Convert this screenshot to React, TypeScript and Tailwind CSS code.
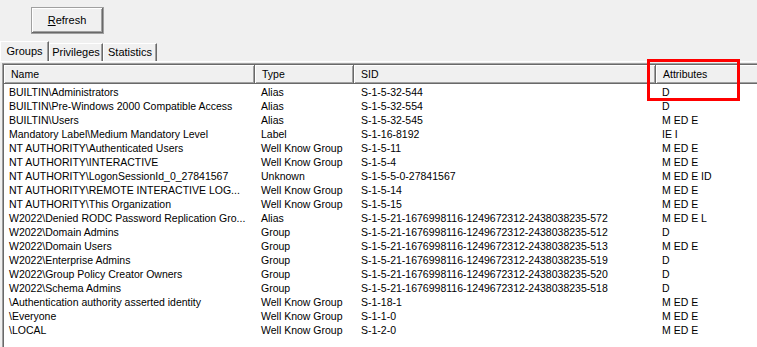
const rows: [string, string, string, string][] = [
  ['BUILTIN\\Administrators', 'Alias', 'S-1-5-32-544', 'D'],
  ['BUILTIN\\Pre-Windows 2000 Compatible Access', 'Alias', 'S-1-5-32-554', 'D'],
  ['BUILTIN\\Users', 'Alias', 'S-1-5-32-545', 'M ED E'],
  ['Mandatory Label\\Medium Mandatory Level', 'Label', 'S-1-16-8192', 'IE I'],
  ['NT AUTHORITY\\Authenticated Users', 'Well Know Group', 'S-1-5-11', 'M ED E'],
  ['NT AUTHORITY\\INTERACTIVE', 'Well Know Group', 'S-1-5-4', 'M ED E'],
  ['NT AUTHORITY\\LogonSessionId_0_27841567', 'Unknown', 'S-1-5-5-0-27841567', 'M ED E ID'],
  ['NT AUTHORITY\\REMOTE INTERACTIVE LOG...', 'Well Know Group', 'S-1-5-14', 'M ED E'],
  ['NT AUTHORITY\\This Organization', 'Well Know Group', 'S-1-5-15', 'M ED E'],
  ['W2022\\Denied RODC Password Replication Gro...', 'Alias', 'S-1-5-21-1676998116-1249672312-2438038235-572', 'M ED E L'],
  ['W2022\\Domain Admins', 'Group', 'S-1-5-21-1676998116-1249672312-2438038235-512', 'D'],
  ['W2022\\Domain Users', 'Group', 'S-1-5-21-1676998116-1249672312-2438038235-513', 'M ED E'],
  ['W2022\\Enterprise Admins', 'Group', 'S-1-5-21-1676998116-1249672312-2438038235-519', 'D'],
  ['W2022\\Group Policy Creator Owners', 'Group', 'S-1-5-21-1676998116-1249672312-2438038235-520', 'D'],
  ['W2022\\Schema Admins', 'Group', 'S-1-5-21-1676998116-1249672312-2438038235-518', 'D'],
  ['\\Authentication authority asserted identity', 'Well Know Group', 'S-1-18-1', 'M ED E'],
  ['\\Everyone', 'Well Know Group', 'S-1-1-0', 'M ED E'],
  ['\\LOCAL', 'Well Know Group', 'S-1-2-0', 'M ED E'],
]

const headCell =
  'h-full shrink-0 border-r border-b border-[#696969] px-[7px] leading-[18px] shadow-[inset_1px_1px_#ffffff,inset_-1px_-1px_#a0a0a0] whitespace-nowrap overflow-hidden'

const App = () => {
  return (
    <div
      className="relative h-[347px] w-[757px] overflow-hidden bg-[#f0f0f0] text-[10.5px] text-black"
      style={{ fontFamily: '"Liberation Sans", Arial, sans-serif' }}
    >
      {/* toolbar */}
      <div className="pt-[8px] pl-[32px]">
        <button className="h-[25px] w-[71px] border-r border-b border-[#696969] bg-[#f0f0f0] text-[11px] shadow-[inset_1px_1px_#ffffff,inset_-1px_-1px_#a0a0a0] outline outline-1 outline-[#a0a0a0]">
          <span className="underline">R</span>efresh
        </button>
      </div>

      {/* tabs */}
      <div className="mt-[8px] flex h-[20px] items-end text-[11px]">
        <div className="relative z-10 flex h-[20px] w-[49px] items-center justify-center border-l border-t border-r border-white border-r-[#696969] bg-[#f0f0f0] shadow-[inset_-1px_0_#a0a0a0]">
          Groups
        </div>
        <div className="flex h-[18px] w-[54px] items-center justify-center border-l border-t border-r border-white border-r-[#696969] shadow-[inset_-1px_0_#a0a0a0]">
          Privileges
        </div>
        <div className="flex h-[18px] w-[54px] items-center justify-center border-l border-t border-r border-white border-r-[#696969] shadow-[inset_-1px_0_#a0a0a0]">
          Statistics
        </div>
      </div>

      {/* tab panel */}
      <div className="border-t border-white pt-[1px] pl-[2px]">
        <div className="w-[900px] border-l border-t border-[#a0a0a0]">
          <div className="h-[400px] border-l border-t border-[#696969] bg-white">
            <div className="flex h-[19px] bg-[#f0f0f0]">
              <div className={`${headCell} w-[251px]`}>Name</div>
              <div className={`${headCell} w-[99px]`}>Type</div>
              <div className={`${headCell} w-[302px]`}>SID</div>
              <div className={`${headCell} w-[120px] px-[5px]`}>Attributes</div>
              <div className={`${headCell} flex-1`} />
            </div>
            <div className="pt-[1px]">
              {rows.map(([name, type, sid, attrs]) => (
                <div key={name} className="flex h-[14px] leading-[14px] whitespace-nowrap">
                  <div className="w-[251px] shrink-0 overflow-hidden pl-[5px]">{name}</div>
                  <div className="w-[99px] shrink-0 overflow-hidden pl-[6px]">{type}</div>
                  <div className="w-[302px] shrink-0 overflow-hidden pl-[7px]">{sid}</div>
                  <div className="w-[120px] shrink-0 overflow-hidden pl-[6px]">{attrs}</div>
                </div>
              ))}
            </div>
          </div>
        </div>
      </div>

      {/* annotation */}
      <div className="absolute left-[647px] top-[59px] h-[42px] w-[93px] border-[3px] border-[#ff0000]" />
    </div>
  )
}

export default App
